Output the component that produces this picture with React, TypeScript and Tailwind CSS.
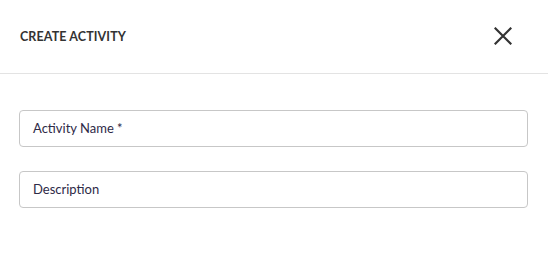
import React from "react";

export default function App() {
  return (
    <div className="w-[548px] h-[256px] bg-white" style={{ fontFamily: '"Lato", "Open Sans", sans-serif' }}>
      <div className="h-[74px] border-b border-[#e3e3e3] flex items-center justify-between pl-[20px] pr-[36px]">
        <div className="text-[12.5px] font-bold text-[#333333] tracking-[0.1px] mt-[2px]">CREATE ACTIVITY</div>
        <svg width="18" height="18" viewBox="0 0 18 18" className="mt-[-2px]">
          <path d="M1.5 1.5 L16.5 16.5 M16.5 1.5 L1.5 16.5" stroke="#333333" strokeWidth="2.2" strokeLinecap="square" />
        </svg>
      </div>
      <div className="pt-[36px] pl-[19px] pr-[20px] flex flex-col gap-[24px]">
        <div className="h-[37px] border border-[#c7c7c7] rounded-[4px] flex items-center pl-[13px] text-[13px] text-[#2e2a47]">
          Activity Name *
        </div>
        <div className="h-[37px] border border-[#c7c7c7] rounded-[4px] flex items-center pl-[13px] text-[13px] text-[#2e2a47]">
          Description
        </div>
      </div>
    </div>
  );
}
